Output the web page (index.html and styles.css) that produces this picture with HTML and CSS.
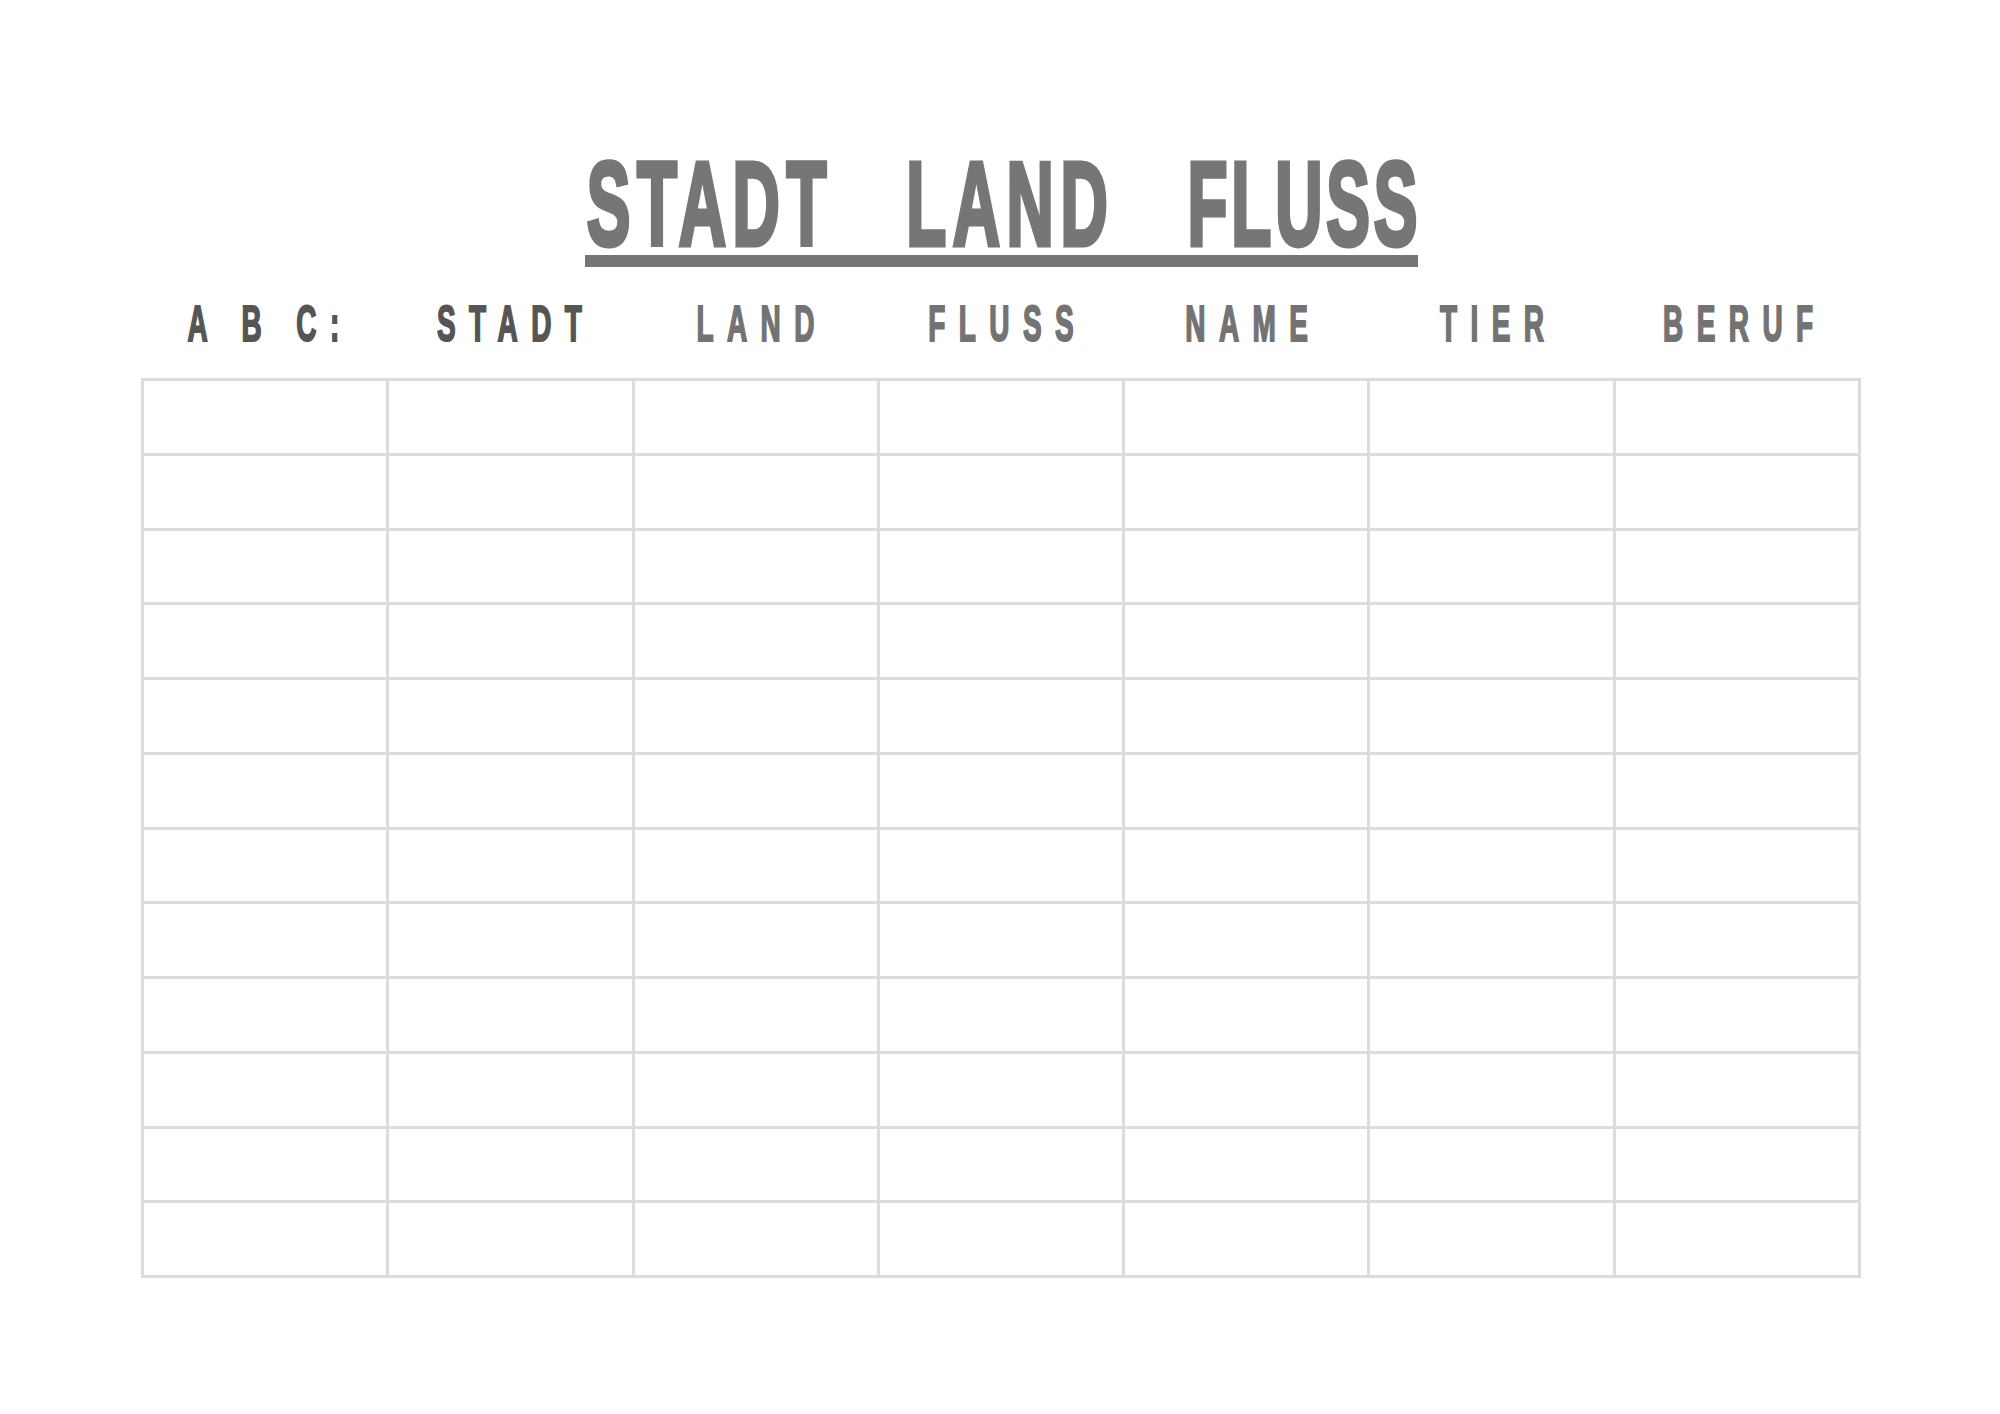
FILE: index.html
```html
<!DOCTYPE html>
<html lang="de">
<head>
<meta charset="utf-8">
<title>Stadt Land Fluss</title>
<link rel="stylesheet" href="styles.css">
</head>
<body>
<main class="sheet">
  <h1 class="title"><span class="word">STADT</span><span class="word">LAND</span><span class="word tight">FLUSS</span></h1>
  <div class="rule"></div>
  <div class="labels">
    <div class="label dark"><span>A B C:</span></div>
    <div class="label dark"><span>STADT</span></div>
    <div class="label"><span>LAND</span></div>
    <div class="label"><span>FLUSS</span></div>
    <div class="label"><span>NAME</span></div>
    <div class="label"><span>TIER</span></div>
    <div class="label"><span>BERUF</span></div>
  </div>
  <div class="grid">
    <div></div><div></div><div></div><div></div><div></div><div></div><div></div>
    <div></div><div></div><div></div><div></div><div></div><div></div><div></div>
    <div></div><div></div><div></div><div></div><div></div><div></div><div></div>
    <div></div><div></div><div></div><div></div><div></div><div></div><div></div>
    <div></div><div></div><div></div><div></div><div></div><div></div><div></div>
    <div></div><div></div><div></div><div></div><div></div><div></div><div></div>
    <div></div><div></div><div></div><div></div><div></div><div></div><div></div>
    <div></div><div></div><div></div><div></div><div></div><div></div><div></div>
    <div></div><div></div><div></div><div></div><div></div><div></div><div></div>
    <div></div><div></div><div></div><div></div><div></div><div></div><div></div>
    <div></div><div></div><div></div><div></div><div></div><div></div><div></div>
    <div></div><div></div><div></div><div></div><div></div><div></div><div></div>
  </div>
</main>
</body>
</html>
```
FILE: styles.css
```css
html, body {
  margin: 0;
  padding: 0;
  background: #ffffff;
}

body {
  width: 2000px;
  height: 1414px;
  overflow: hidden;
  font-family: "Liberation Sans", Arial, sans-serif;
}

.sheet {
  box-sizing: border-box;
  width: 2000px;
  padding: 154px 139px 0 141px;
  display: flex;
  flex-direction: column;
}

.title {
  margin: 0;
  display: flex;
  justify-content: center;
  gap: 133px;
  font-size: 119px;
  line-height: 100px;
  font-weight: 700;
  color: #767676;
  -webkit-text-stroke: 5px #767676;
  letter-spacing: 12px;
  transform: translateX(3px) scaleX(0.55);
  transform-origin: 50% 50%;
  white-space: nowrap;
}

.title .tight {
  letter-spacing: 7px;
}

.rule {
  width: 833px;
  height: 12px;
  margin: 1px auto 0;
  background: #767676;
}

.labels {
  margin-top: 31px;
  display: grid;
  grid-template-columns: repeat(7, minmax(0, 1fr));
  height: 52px;
}

.label {
  min-width: 0;
  display: flex;
  justify-content: center;
  font-size: 50px;
  line-height: 52px;
  font-weight: 700;
  color: #737373;
  -webkit-text-stroke: 2px #737373;
  white-space: pre;
}

.label span {
  display: inline-block;
  flex: none;
  letter-spacing: 24px;
  margin-right: -24px;
  transform: scaleX(0.56);
  transform-origin: calc(50% - 12px) 50%;
}

.label.dark {
  color: #555555;
  -webkit-text-stroke-color: #555555;
}

.grid {
  margin-top: 28px;
  display: grid;
  grid-template-columns: repeat(7, minmax(0, 1fr));
  grid-template-rows: repeat(12, 71.75px);
  gap: 3px;
  padding: 3px;
  background: #dcdcdc;
}

.grid > div {
  background: #ffffff;
}
```
